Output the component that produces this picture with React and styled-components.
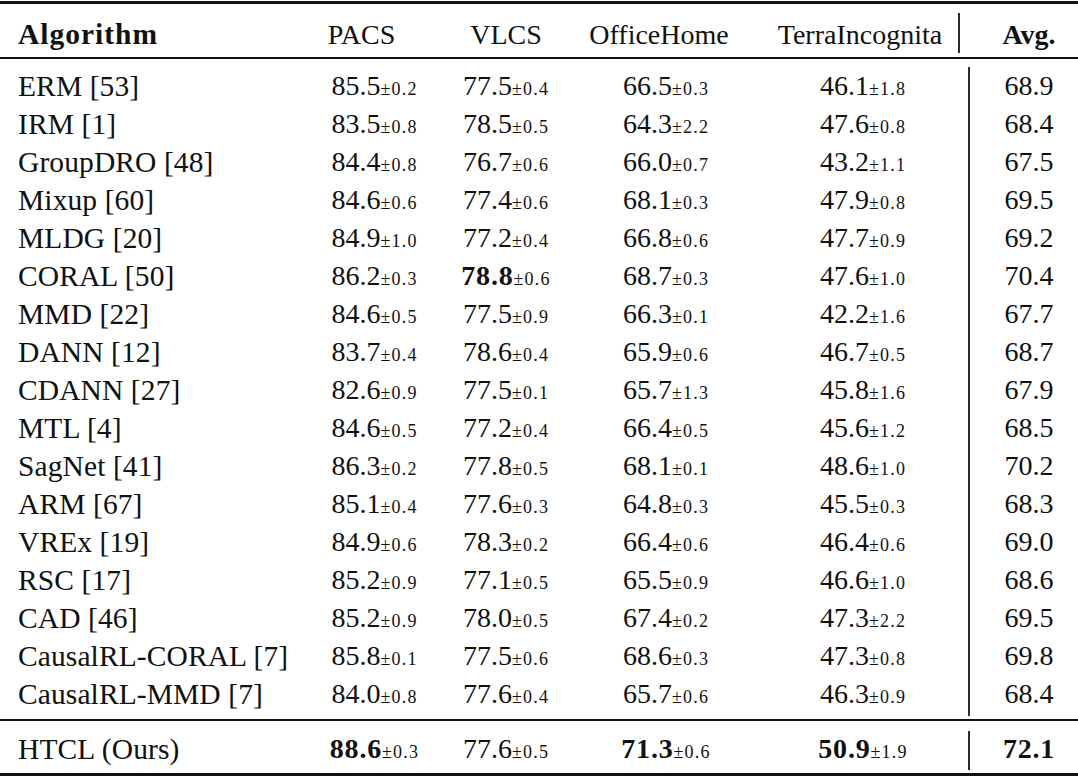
import React from "react";
import styled, { createGlobalStyle } from "styled-components";

const GlobalStyle = createGlobalStyle`
  html, body {
    margin: 0;
    padding: 0;
    background: #fff;
  }
  body {
    font-family: "Liberation Serif", "Times New Roman", serif;
    color: #111;
  }
`;

const Table = styled.div`
  width: 1078px;
  padding-top: 1px;
  display: flex;
  flex-direction: column;
`;

const Rule = styled.div`
  height: ${(p) => p.$weight}px;
  background: #111;
`;

const Section = styled.div`
  display: flex;
  flex-direction: column;
  padding-top: ${(p) => p.$top}px;
  padding-bottom: ${(p) => p.$bottom}px;
`;

const Row = styled.div`
  display: grid;
  grid-template-columns: ${(p) =>
    p.$header
      ? "300px 149px 114px 206px 189px 120px"
      : "300px 149px 114px 206px 199px 110px"};
  height: ${(p) => p.$height}px;
  line-height: ${(p) => p.$height}px;
  font-size: 28px;
`;

const NameCell = styled.div`
  padding-left: 18px;
  white-space: nowrap;
  font-size: 29.5px;
  font-weight: ${(p) => (p.$bold ? 700 : 400)};
  letter-spacing: ${(p) => (p.$bold ? "1px" : "0.1px")};
  padding-top: ${(p) => p.$lift || 0}px;
`;

const HeadCell = styled.div`
  text-align: center;
  white-space: nowrap;
  padding-top: 3px;
  padding-right: ${(p) => p.$right || 0}px;
  padding-left: ${(p) => p.$left || 0}px;
  font-weight: ${(p) => (p.$bold ? 700 : 400)};
  border-left: ${(p) => (p.$sep ? "2px solid #2a2a2a" : "none")};
`;

const ValueCell = styled.div`
  text-align: center;
  white-space: nowrap;
  padding-right: ${(p) => p.$right || 0}px;
  padding-left: ${(p) => p.$left || 0}px;
  border-left: ${(p) => (p.$sep ? "2px solid #2a2a2a" : "none")};
`;

const Main = styled.span`
  font-weight: ${(p) => (p.$bold ? 700 : 400)};
  letter-spacing: ${(p) => (p.$bold ? "0.8px" : "0")};
`;

const Std = styled.span`
  font-size: 18px;
  letter-spacing: 1.2px;
`;

const rows = [
  ["ERM [53]", "85.5", "0.2", "77.5", "0.4", "66.5", "0.3", "46.1", "1.8", "68.9"],
  ["IRM [1]", "83.5", "0.8", "78.5", "0.5", "64.3", "2.2", "47.6", "0.8", "68.4"],
  ["GroupDRO [48]", "84.4", "0.8", "76.7", "0.6", "66.0", "0.7", "43.2", "1.1", "67.5"],
  ["Mixup [60]", "84.6", "0.6", "77.4", "0.6", "68.1", "0.3", "47.9", "0.8", "69.5"],
  ["MLDG [20]", "84.9", "1.0", "77.2", "0.4", "66.8", "0.6", "47.7", "0.9", "69.2"],
  ["CORAL [50]", "86.2", "0.3", "*78.8", "0.6", "68.7", "0.3", "47.6", "1.0", "70.4"],
  ["MMD [22]", "84.6", "0.5", "77.5", "0.9", "66.3", "0.1", "42.2", "1.6", "67.7"],
  ["DANN [12]", "83.7", "0.4", "78.6", "0.4", "65.9", "0.6", "46.7", "0.5", "68.7"],
  ["CDANN [27]", "82.6", "0.9", "77.5", "0.1", "65.7", "1.3", "45.8", "1.6", "67.9"],
  ["MTL [4]", "84.6", "0.5", "77.2", "0.4", "66.4", "0.5", "45.6", "1.2", "68.5"],
  ["SagNet [41]", "86.3", "0.2", "77.8", "0.5", "68.1", "0.1", "48.6", "1.0", "70.2"],
  ["ARM [67]", "85.1", "0.4", "77.6", "0.3", "64.8", "0.3", "45.5", "0.3", "68.3"],
  ["VREx [19]", "84.9", "0.6", "78.3", "0.2", "66.4", "0.6", "46.4", "0.6", "69.0"],
  ["RSC [17]", "85.2", "0.9", "77.1", "0.5", "65.5", "0.9", "46.6", "1.0", "68.6"],
  ["CAD [46]", "85.2", "0.9", "78.0", "0.5", "67.4", "0.2", "47.3", "2.2", "69.5"],
  ["CausalRL-CORAL [7]", "85.8", "0.1", "77.5", "0.6", "68.6", "0.3", "47.3", "0.8", "69.8"],
  ["CausalRL-MMD [7]", "84.0", "0.8", "77.6", "0.4", "65.7", "0.6", "46.3", "0.9", "68.4"],
];

const ours = ["HTCL (Ours)", "*88.6", "0.3", "77.6", "0.5", "*71.3", "0.6", "*50.9", "1.9", "*72.1"];

const Value = ({ v, s }) => {
  const bold = v.startsWith("*");
  return (
    <>
      <Main $bold={bold}>{bold ? v.slice(1) : v}</Main>
      {s && <Std>±{s}</Std>}
    </>
  );
};

const DataRow = ({ r, height }) => (
  <Row $height={height}>
    <NameCell>{r[0]}</NameCell>
    <ValueCell>
      <Value v={r[1]} s={r[2]} />
    </ValueCell>
    <ValueCell>
      <Value v={r[3]} s={r[4]} />
    </ValueCell>
    <ValueCell>
      <Value v={r[5]} s={r[6]} />
    </ValueCell>
    <ValueCell $right={11}>
      <Value v={r[7]} s={r[8]} />
    </ValueCell>
    <ValueCell $sep $left={10}>
      <Value v={r[9]} />
    </ValueCell>
  </Row>
);

export default function App() {
  return (
    <>
      <GlobalStyle />
      <Table>
        <Rule $weight={3} />
        <Section $top={9} $bottom={7}>
          <Row $header $height={37}>
            <NameCell $bold $lift={3}>Algorithm</NameCell>
            <HeadCell $right={26}>PACS</HeadCell>
            <HeadCell>VLCS</HeadCell>
            <HeadCell $right={14}>OfficeHome</HeadCell>
            <HeadCell $right={7}>TerraIncognita</HeadCell>
            <HeadCell $sep $bold $left={20}>
              Avg.
            </HeadCell>
          </Row>
        </Section>
        <Rule $weight={2} />
        <Section $top={8} $bottom={6}>
          {rows.map((r) => (
            <DataRow key={r[0]} r={r} height={38} />
          ))}
        </Section>
        <Rule $weight={2} />
        <Section $top={10} $bottom={6}>
          <DataRow r={ours} height={36} />
        </Section>
        <Rule $weight={3} />
      </Table>
    </>
  );
}
